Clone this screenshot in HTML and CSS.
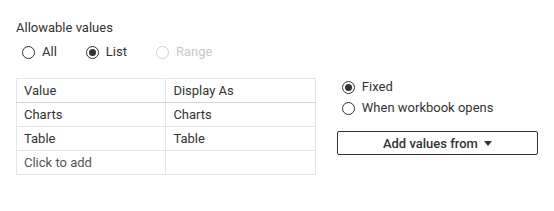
FILE: index.html
```html
<!DOCTYPE html>
<html lang="en">
<head>
    <meta charset="UTF-8">
    <title>Allowable values</title>
    <link rel="stylesheet" href="styles.css">
</head>
<body>
    <div class="panel">
        <div class="section-title">Allowable values</div>
        <div class="radio-row">
            <label class="radio"><span class="dot"></span>All</label>
            <label class="radio checked"><span class="dot"></span>List</label>
            <label class="radio disabled"><span class="dot"></span>Range</label>
        </div>

        <div class="list-area">
            <table class="values-table">
                <tr class="head">
                    <td>Value</td>
                    <td>Display As</td>
                </tr>
                <tr>
                    <td>Charts</td>
                    <td>Charts</td>
                </tr>
                <tr>
                    <td>Table</td>
                    <td>Table</td>
                </tr>
                <tr>
                    <td class="add">Click to add</td>
                    <td></td>
                </tr>
            </table>

            <div class="side">
                <label class="radio checked"><span class="dot"></span>Fixed</label>
                <label class="radio"><span class="dot"></span>When workbook opens</label>
                <button class="add-button">Add values from <span class="caret"></span></button>
            </div>
        </div>
    </div>
</body>
</html>
```

FILE: styles.css
```css
body {
    margin: 0;
    background-color: #fff;
    font-family: Roboto, 'Liberation Sans', Arial, sans-serif;
    font-size: 13px;
    color: #333;
}

.panel {
    padding: 20px 16px 0 16px;
}

.section-title {
    line-height: 16px;
}

.radio-row {
    display: flex;
    margin-top: 8px;
    padding-left: 6px;
    gap: 29px;
}

.radio {
    display: flex;
    align-items: center;
    gap: 7px;
    line-height: 16px;
}

.dot {
    box-sizing: border-box;
    width: 13px;
    height: 13px;
    border: 1px solid #333;
    border-radius: 50%;
    display: flex;
    align-items: center;
    justify-content: center;
}

.radio.checked .dot::after {
    content: "";
    width: 7px;
    height: 7px;
    border-radius: 50%;
    background-color: #333;
}

.radio.disabled {
    color: #c8c8c8;
}

.radio.disabled .dot {
    border-color: #d0d0d0;
}

.list-area {
    display: flex;
    margin-top: 18px;
}

.values-table {
    width: 301px;
    border-collapse: collapse;
}

.values-table td {
    width: 50%;
    height: 23px;
    padding: 0 0 0 7px;
    border: 1px solid #e6e6e6;
}

.values-table .head td {
    border-bottom-color: #d4d4d4;
}

.values-table .add {
    color: #555;
}

.side {
    margin-left: 21px;
    margin-top: 1px;
    width: 202px;
    display: flex;
    flex-direction: column;
    gap: 5px;
}

.side .radio {
    padding-left: 5px;
}

.add-button {
    margin-top: 10px;
    height: 24px;
    border: 1px solid #333;
    border-radius: 2px;
    background-color: #fff;
    color: #333;
    font-family: inherit;
    font-size: 13px;
    font-weight: 500;
    display: flex;
    align-items: center;
    justify-content: center;
    gap: 6px;
}

.caret {
    width: 0;
    height: 0;
    border-left: 4px solid transparent;
    border-right: 4px solid transparent;
    border-top: 5px solid #333;
}
```
